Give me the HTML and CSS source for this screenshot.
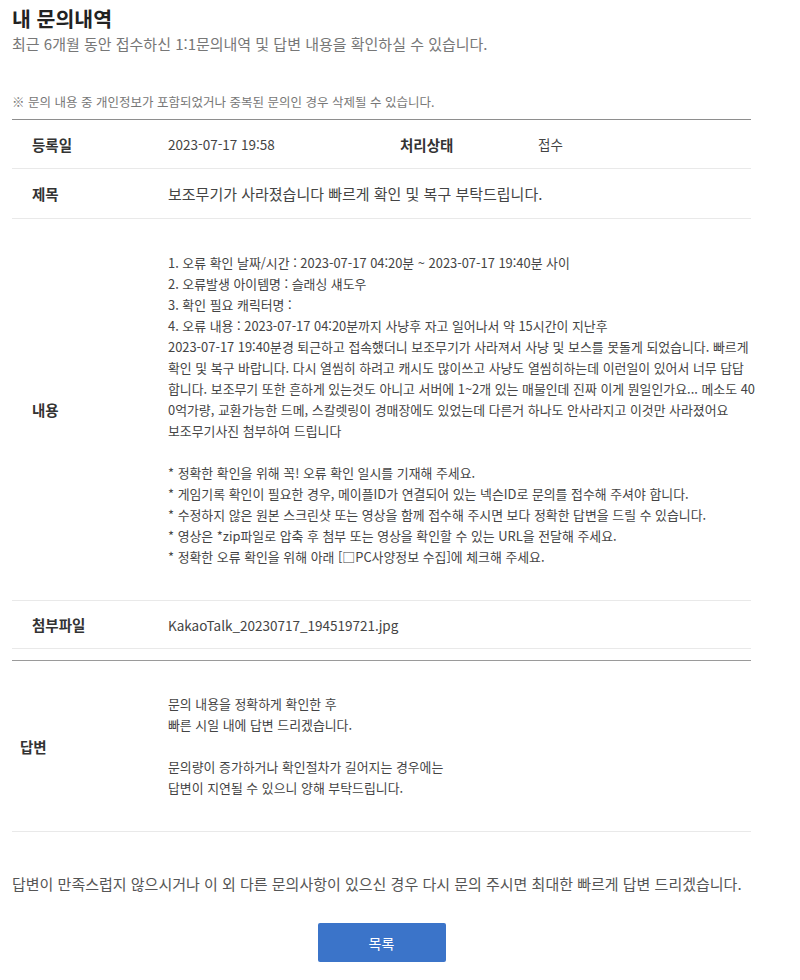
FILE: index.html
```html
<!DOCTYPE html>
<html lang="ko">
<head>
<meta charset="utf-8">
<title>내 문의내역</title>
<link rel="stylesheet" href="styles.css">
</head>
<body>
<div class="page">
  <h1 class="title">내 문의내역</h1>
  <p class="subtitle">최근 6개월 동안 접수하신 1:1문의내역 및 답변 내용을 확인하실 수 있습니다.</p>
  <p class="notice">※ 문의 내용 중 개인정보가 포함되었거나 중복된 문의인 경우 삭제될 수 있습니다.</p>

  <div class="info">
    <div class="row row-meta">
      <div class="label">등록일</div>
      <div class="value value-date">2023-07-17 19:58</div>
      <div class="label label-inline">처리상태</div>
      <div class="value value-state">접수</div>
    </div>
    <div class="row row-subject">
      <div class="label">제목</div>
      <div class="value value-subject">보조무기가 사라졌습니다 빠르게 확인 및 복구 부탁드립니다.</div>
    </div>
    <div class="row row-content">
      <div class="label">내용</div>
      <div class="value body-text">
        <div class="line">1. 오류 확인 날짜/시간 : 2023-07-17 04:20분 ~ 2023-07-17 19:40분 사이</div>
        <div class="line">2. 오류발생 아이템명 : 슬래싱 섀도우</div>
        <div class="line">3. 확인 필요 캐릭터명 :</div>
        <div class="line">4. 오류 내용 : 2023-07-17 04:20분까지 사냥후 자고 일어나서 약 15시간이 지난후</div>
        <div class="line">2023-07-17 19:40분경 퇴근하고 접속했더니 보조무기가 사라져서 사냥 및 보스를 못돌게 되었습니다. 빠르게</div>
        <div class="line">확인 및 복구 바랍니다. 다시 열씸히 하려고 캐시도 많이쓰고 사냥도 열씸히하는데 이런일이 있어서 너무 답답</div>
        <div class="line">합니다. 보조무기 또한 흔하게 있는것도 아니고 서버에 1~2개 있는 매물인데 진짜 이게 뭔일인가요... 메소도 40</div>
        <div class="line">0억가량, 교환가능한 드메, 스칼렛링이 경매장에도 있었는데 다른거 하나도 안사라지고 이것만 사라졌어요</div>
        <div class="line">보조무기사진 첨부하여 드립니다</div>
        <div class="line">&nbsp;</div>
        <div class="line">* 정확한 확인을 위해 꼭! 오류 확인 일시를 기재해 주세요.</div>
        <div class="line">* 게임기록 확인이 필요한 경우, 메이플ID가 연결되어 있는 넥슨ID로 문의를 접수해 주셔야 합니다.</div>
        <div class="line">* 수정하지 않은 원본 스크린샷 또는 영상을 함께 접수해 주시면 보다 정확한 답변을 드릴 수 있습니다.</div>
        <div class="line">* 영상은 *zip파일로 압축 후 첨부 또는 영상을 확인할 수 있는 URL을 전달해 주세요.</div>
        <div class="line">* 정확한 오류 확인을 위해 아래 [□PC사양정보 수집]에 체크해 주세요.</div>
      </div>
    </div>
    <div class="row row-file">
      <div class="label">첨부파일</div>
      <div class="value value-file">KakaoTalk_20230717_194519721.jpg</div>
    </div>
  </div>

  <div class="answer">
    <div class="row row-answer">
      <div class="label label-answer">답변</div>
      <div class="value body-text">
        <div class="line">문의 내용을 정확하게 확인한 후</div>
        <div class="line">빠른 시일 내에 답변 드리겠습니다.</div>
        <div class="line">&nbsp;</div>
        <div class="line">문의량이 증가하거나 확인절차가 길어지는 경우에는</div>
        <div class="line">답변이 지연될 수 있으니 양해 부탁드립니다.</div>
      </div>
    </div>
  </div>

  <p class="footer-note">답변이 만족스럽지 않으시거나 이 외 다른 문의사항이 있으신 경우 다시 문의 주시면 최대한 빠르게 답변 드리겠습니다.</p>

  <div class="actions">
    <button class="btn-list" type="button">목록</button>
  </div>
</div>
</body>
</html>
```

FILE: styles.css
```css
* {
  box-sizing: border-box;
}

html, body {
  margin: 0;
  padding: 0;
  background: #ffffff;
}

body {
  font-family: "Noto Sans CJK KR", "Noto Sans", sans-serif;
  color: #333333;
}

.page {
  width: 763px;
  padding: 5px 12px 0 12px;
}

.title {
  margin: 0;
  font-size: 20.5px;
  line-height: 26px;
  font-weight: 700;
  color: #222222;
}

.subtitle {
  margin: 3px 0 0;
  font-size: 15px;
  line-height: 20px;
  color: #777777;
}

.notice {
  margin: 40px 0 0;
  font-size: 12.5px;
  line-height: 16px;
  color: #777777;
}

.info {
  margin-top: 9px;
  border-top: 1px solid #8e8e8e;
}

.row {
  display: grid;
  grid-template-columns: 156px 1fr;
  align-items: center;
  min-height: 49px;
  border-bottom: 1px solid #e9e9e9;
}

.row-meta {
  grid-template-columns: 156px 232px 138px 1fr;
}

.row-subject {
  min-height: 50px;
}

.row-content {
  min-height: 381px;
}

.row-file {
  min-height: 48px;
}

.label {
  padding-left: 20px;
  font-size: 14.5px;
  font-weight: 700;
  color: #333333;
}

.label-inline {
  padding-left: 0;
}

.label-answer {
  padding-left: 8px;
}

.value {
  font-size: 13.5px;
  color: #444444;
}

.value-date,
.value-file,
.value-state {
  font-size: 13.5px;
}

.value-subject {
  font-size: 15px;
}

.body-text {
  padding: 33px 0;
  font-size: 12.9px;
  line-height: 21px;
  color: #444444;
}

.line {
  white-space: nowrap;
}

.answer {
  margin-top: 11px;
  border-top: 1px solid #9a9a9a;
}

.row-answer {
  min-height: 170px;
}

.row-answer .body-text {
  padding: 32px 0 33px;
}

.footer-note {
  margin: 42px 0 0;
  font-size: 15px;
  line-height: 20px;
  color: #555555;
}

.actions {
  display: flex;
  justify-content: center;
  margin-top: 29px;
  width: 739px;
}

.btn-list {
  width: 128px;
  height: 39px;
  border: 0;
  border-radius: 2px;
  background: #3b74c9;
  color: #ffffff;
  font-family: "Noto Sans CJK KR", "Noto Sans", sans-serif;
  font-size: 14px;
  cursor: pointer;
}
```
